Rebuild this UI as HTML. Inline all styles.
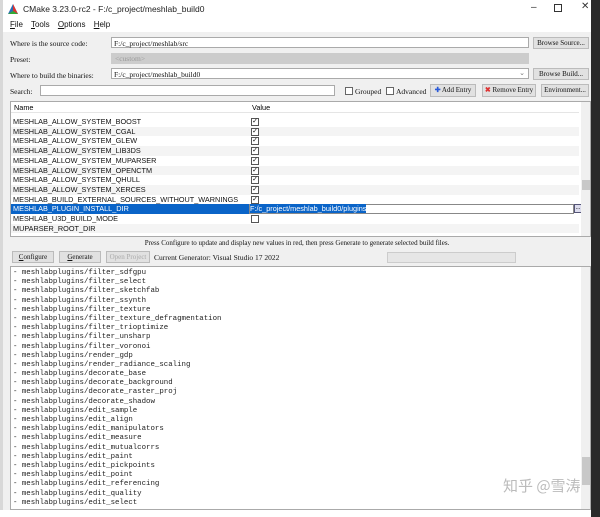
<!DOCTYPE html>
<html><head><meta charset="utf-8"><style>
*{margin:0;padding:0;box-sizing:border-box}
body{width:600px;height:517px;background:#2a2a2a;position:relative;overflow:hidden;font-family:"Liberation Sans",sans-serif}
.win{position:absolute;left:0;top:0;width:591px;height:510px;background:#f0f0f0;border-left:3px solid #d8d8d8}
.abs{position:absolute}
.ser{font-family:"Liberation Serif",serif;font-size:7.5px;color:#111}
.box{position:absolute;background:#fff;border:1px solid #aaa}
.btn{position:absolute;background:#e1e1e1;border:1px solid #bbb;font-family:"Liberation Serif",serif;font-size:7px;text-align:center;line-height:11px;color:#111}
.row{position:absolute;left:0;width:568px;height:9.7px;font-size:7.3px;line-height:9.7px;padding-left:2px;color:#111}
.row.alt{background:#f4f4f4}
.cb{position:absolute;left:240px;top:1px;width:8px;height:8px;border:1px solid #555;background:#fff;font-size:7px;line-height:6px;text-align:center}
.log div{height:9.2px;font-family:"Liberation Mono",monospace;font-size:7.4px;line-height:9.2px;color:#222;padding-left:2px}
</style></head><body>
<div class="win">
<div class="abs" style="left:0;top:0;width:588px;height:18px;background:#fff"></div>
<svg class="abs" style="left:5px;top:4px" width="10" height="10"><polygon points="5,0 10,10 0,10" fill="#2a6db5"/><polygon points="5,0 10,10 5,7" fill="#d33"/><polygon points="0,10 5,7 10,10" fill="#3a3"/></svg>
<div class="abs" style="left:20px;top:4px;font-size:8.5px;color:#222">CMake 3.23.0-rc2 - F:/c_project/meshlab_build0</div>
<div class="abs" style="left:528px;top:2px;font-size:10px;color:#333">–</div>
<div class="abs" style="left:551px;top:4px;width:8px;height:8px;border:1px solid #333"></div>
<div class="abs" style="left:578px;top:1px;font-size:10px;color:#333">✕</div>
<div class="abs" style="left:0;top:18px;width:588px;height:14px;background:#fff"></div>
<div class="abs" style="left:7px;top:20px;font-size:8px;color:#111;word-spacing:6px"><u>F</u>ile <u>T</u>ools <u>O</u>ptions <u>H</u>elp</div>
<div class="abs ser" style="left:7px;top:39px">Where is the source code:</div>
<div class="box" style="left:108px;top:37px;width:418px;height:11px"><span class="ser abs" style="left:2px;top:1px">F:/c_project/meshlab/src</span></div>
<div class="btn" style="left:530px;top:37px;width:56px;height:12px">Browse Source...</div>
<div class="abs ser" style="left:7px;top:55px">Preset:</div>
<div class="abs" style="left:108px;top:53px;width:418px;height:11px;background:#ccc"><span class="ser abs" style="left:4px;top:1px;color:#999">&lt;custom&gt;</span></div>
<div class="abs ser" style="left:7px;top:71px">Where to build the binaries:</div>
<div class="box" style="left:108px;top:68px;width:418px;height:11px"><span class="ser abs" style="left:2px;top:1px">F:/c_project/meshlab_build0</span><span class="abs" style="right:3px;top:0;font-size:7px;color:#777">⌄</span></div>
<div class="btn" style="left:530px;top:68px;width:56px;height:12px">Browse Build...</div>
<div class="abs ser" style="left:7px;top:87px">Search:</div>
<div class="box" style="left:37px;top:85px;width:295px;height:11px"></div>
<div class="abs" style="left:342px;top:87px;width:8px;height:8px;border:1px solid #666;background:#fff"></div>
<div class="abs ser" style="left:352px;top:87px">Grouped</div>
<div class="abs" style="left:383px;top:87px;width:8px;height:8px;border:1px solid #666;background:#fff"></div>
<div class="abs ser" style="left:393px;top:87px">Advanced</div>
<div class="btn" style="left:427px;top:84px;width:46px;height:13px"><span style="color:#2a5ad8;font-weight:bold">✚</span> Add Entry</div>
<div class="btn" style="left:479px;top:84px;width:54px;height:13px"><span style="color:#d33;font-weight:bold">✖</span> Remove Entry</div>
<div class="btn" style="left:538px;top:84px;width:48px;height:13px">Environment...</div>
<div class="box" style="left:7px;top:101px;width:581px;height:136px;overflow:hidden">
 <div class="abs" style="left:0;top:0;width:568px;height:11px;font-size:7.3px;line-height:11px;padding-left:3px;border-bottom:1px solid #e5e5e5">Name<span class="abs" style="left:241px">Value</span></div>
 <div class="abs" style="left:0;top:15px;width:570px">
  <div class="row" style="top:0">MESHLAB_ALLOW_SYSTEM_BOOST<span class="cb">✓</span></div>
  <div class="row alt" style="top:9.7px">MESHLAB_ALLOW_SYSTEM_CGAL<span class="cb">✓</span></div>
  <div class="row" style="top:19.4px">MESHLAB_ALLOW_SYSTEM_GLEW<span class="cb">✓</span></div>
  <div class="row alt" style="top:29.1px">MESHLAB_ALLOW_SYSTEM_LIB3DS<span class="cb">✓</span></div>
  <div class="row" style="top:38.8px">MESHLAB_ALLOW_SYSTEM_MUPARSER<span class="cb">✓</span></div>
  <div class="row alt" style="top:48.5px">MESHLAB_ALLOW_SYSTEM_OPENCTM<span class="cb">✓</span></div>
  <div class="row" style="top:58.2px">MESHLAB_ALLOW_SYSTEM_QHULL<span class="cb">✓</span></div>
  <div class="row alt" style="top:67.9px">MESHLAB_ALLOW_SYSTEM_XERCES<span class="cb">✓</span></div>
  <div class="row" style="top:77.6px">MESHLAB_BUILD_EXTERNAL_SOURCES_WITHOUT_WARNINGS<span class="cb">✓</span></div>
  <div class="row" style="top:87.3px;background:#0a64c8;color:#fff;width:238px">MESHLAB_PLUGIN_INSTALL_DIR</div>
  <div class="abs" style="left:238px;top:87.3px;width:325px;height:9.7px;background:#fff;border:1px solid #888;font-size:7.3px;line-height:8px"><span style="background:#0a64c8;color:#fff">F:/c_project/meshlab_build0/plugins</span></div>
  <div class="abs" style="left:563px;top:87.3px;width:8px;height:9px;border:1px solid #557;background:#dde;font-size:6px;line-height:6px;text-align:center">...</div>
  <div class="row" style="top:97px">MESHLAB_U3D_BUILD_MODE<span class="cb"></span></div>
  <div class="row alt" style="top:106.7px">MUPARSER_ROOT_DIR</div>
 </div>
 <div class="abs" style="left:570px;top:0;width:10px;height:134px;background:#f0f0f0"><div class="abs" style="left:1px;top:78px;width:8px;height:10px;background:#c8c8c8"></div></div>
</div>
<div class="abs ser" style="left:0;width:588px;text-align:center;top:239px;font-size:7px">Press Configure to update and display new values in red, then press Generate to generate selected build files.</div>
<div class="btn" style="left:9px;top:251px;width:42px;height:12px"><u>C</u>onfigure</div>
<div class="btn" style="left:56px;top:251px;width:42px;height:12px"><u>G</u>enerate</div>
<div class="btn" style="left:103px;top:251px;width:44px;height:12px;color:#aaa">Open Project</div>
<div class="abs ser" style="left:151px;top:253px">Current Generator: Visual Studio 17 2022</div>
<div class="abs" style="left:384px;top:252px;width:129px;height:11px;background:#e6e6e6;border:1px solid #ccc"></div>
<div class="box log" style="left:7px;top:266px;width:581px;height:244px;padding-top:2px;overflow:hidden">
<div>- meshlabplugins/filter_sdfgpu</div><div>- meshlabplugins/filter_select</div><div>- meshlabplugins/filter_sketchfab</div><div>- meshlabplugins/filter_ssynth</div><div>- meshlabplugins/filter_texture</div><div>- meshlabplugins/filter_texture_defragmentation</div><div>- meshlabplugins/filter_trioptimize</div><div>- meshlabplugins/filter_unsharp</div><div>- meshlabplugins/filter_voronoi</div><div>- meshlabplugins/render_gdp</div><div>- meshlabplugins/render_radiance_scaling</div><div>- meshlabplugins/decorate_base</div><div>- meshlabplugins/decorate_background</div><div>- meshlabplugins/decorate_raster_proj</div><div>- meshlabplugins/decorate_shadow</div><div>- meshlabplugins/edit_sample</div><div>- meshlabplugins/edit_align</div><div>- meshlabplugins/edit_manipulators</div><div>- meshlabplugins/edit_measure</div><div>- meshlabplugins/edit_mutualcorrs</div><div>- meshlabplugins/edit_paint</div><div>- meshlabplugins/edit_pickpoints</div><div>- meshlabplugins/edit_point</div><div>- meshlabplugins/edit_referencing</div><div>- meshlabplugins/edit_quality</div><div>- meshlabplugins/edit_select</div>
<div class="abs" style="left:570px;top:0;width:10px;height:242px;background:#f0f0f0"><div class="abs" style="left:1px;top:190px;width:8px;height:28px;background:#c8c8c8"></div></div>
<div class="abs" style="left:490px;top:214px;font-family:'Noto Sans CJK SC',sans-serif;font-size:15px;color:#bbb">知乎 @雪涛</div>
</div>
</div>
<div class="abs" style="left:0;top:510px;width:591px;height:7px;background:#fff"></div>
</body></html>
